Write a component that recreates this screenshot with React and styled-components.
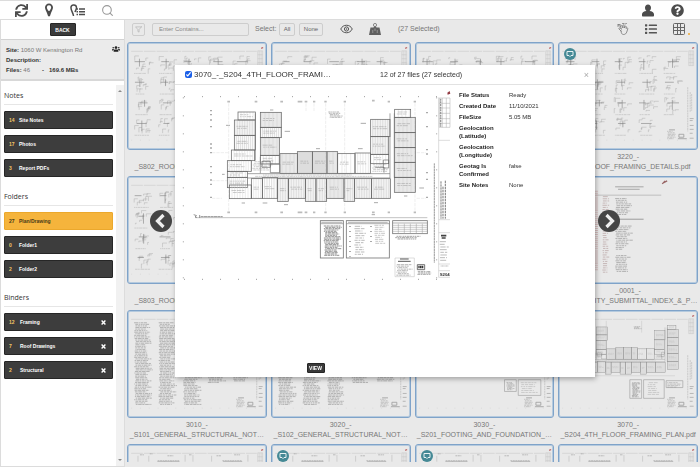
import React from "react";
import styled, { createGlobalStyle } from "styled-components";
import { FaSync, FaUsers, FaQuestionCircle, FaList } from "react-icons/fa";
import { FiFilter, FiSearch } from "react-icons/fi";

const Global = createGlobalStyle`
  *, *::before, *::after { box-sizing: border-box; }
  body { margin: 0; background: #fff; font-family: "Liberation Sans", Arial, sans-serif; font-size: 7px; line-height: 10px; color: #444; }
  button, input { font-family: inherit; margin: 0; }
  button { padding: 0; border: 0; background: none; color: inherit; cursor: pointer; }
  svg { display: block; }
  h1, h2, p, dl, dd, figure { margin: 0; }
`;

/* ---------- shell ---------- */

const Shell = styled.div`
  height: 100vh;
  display: flex;
  flex-direction: column;
  border-top: 1px solid #dcdcdc;
`;

const TopBar = styled.header`
  flex: 0 0 19px;
  display: flex;
  align-items: center;
  justify-content: space-between;
  padding: 0 16px 0 15px;
  border-bottom: 1px solid #dcdcdc;
  color: #4c4c4c;
`;

const IconGroup = styled.div`
  display: flex;
  align-items: center;
  gap: ${(p) => p.$gap}px;
`;

const IconButton = styled.button`
  display: flex;
  align-items: center;
  justify-content: center;
  color: ${(p) => p.$color || "#4c4c4c"};
`;

const Columns = styled.div`
  flex: 1;
  min-height: 0;
  display: grid;
  grid-template-columns: 125px minmax(0, 1fr);
`;

/* ---------- sidebar ---------- */

const Sidebar = styled.aside`
  display: flex;
  flex-direction: column;
  min-height: 0;
  border: solid #dcdcdc;
  border-width: 0 1px 1px 1px;
`;

const BackRow = styled.div`
  flex: 0 0 20px;
  display: flex;
  align-items: center;
  justify-content: center;
  border-bottom: 1px solid #d2d2d2;
`;

const DarkButton = styled.button`
  background: #3a3a3a;
  border: 1px solid #262626;
  border-radius: 1px;
  color: #fff;
  font-weight: bold;
  font-size: 5px;
  line-height: 8px;
  width: ${(p) => p.$width}px;
  height: ${(p) => p.$height}px;
`;

const SiteInfo = styled.section`
  flex: 0 0 41px;
  display: flex;
  justify-content: space-between;
  padding: 5px 4px 0 5px;
  background: #ebebeb;
  border-bottom: 2px solid #d8d8d8;
  font-size: 6px;
  color: #777;
  b { color: #333; }
`;

const Gap = styled.span`
  display: inline-block;
  width: 12px;
`;

const ScrollArea = styled.div`
  flex: 1;
  min-height: 0;
  display: flex;
  padding-top: 4px;
`;

const Lists = styled.nav`
  flex: 1;
  overflow: hidden;
  padding: 6px 3px 0 3px;
`;

const Rail = styled.div`
  flex: 0 0 8px;
  display: flex;
  flex-direction: column;
  justify-content: space-between;
  align-items: center;
  padding: 3px 0;
  background: #f1f1f1;
`;

const Arrow = styled.i`
  border: 2px solid transparent;
  ${(p) => (p.$up ? "border-bottom-color" : "border-top-color")}: #8a8a8a;
`;

const ListGroup = styled.section`
  display: flex;
  flex-direction: column;
  gap: 6px;
  margin-bottom: 15px;
`;

const GroupTitle = styled.h2`
  font: 400 7px/10px "Open Sans", "Noto Sans", sans-serif;
  color: #333;
  padding-bottom: 3px;
  border-bottom: 1px solid #e6e6e6;
`;

const Item = styled.div`
  height: 18px;
  display: flex;
  align-items: center;
  padding: 0 6px 0 4px;
  border: 1px solid ${(p) => (p.$active ? "#eba82c" : "#262626")};
  border-radius: 1px;
  background: ${(p) => (p.$active ? "#f5b43c" : "#3d3d3d")};
  color: ${(p) => (p.$active ? "#4a3a18" : "#fff")};
`;

const ItemMain = styled.button`
  flex: 1;
  display: flex;
  gap: ${(p) => (p.$wide ? 3 : 2)}px;
  text-align: left;
  font-weight: bold;
  font-size: 5px;
  line-height: 8px;
`;

const Count = styled.span`
  width: 8px;
  color: ${(p) => (p.$active ? "inherit" : "#f3c566")};
`;

/* ---------- main ---------- */

const Main = styled.main`
  display: flex;
  flex-direction: column;
  min-height: 0;
  background: #e9e9e9;
  padding: 0 2px 5px;
`;

const Toolbar = styled.div`
  flex: 0 0 22px;
  display: flex;
  align-items: center;
  padding: 0 8px 4px 5px;
  color: #777;
`;

const OutlineButton = styled.button`
  display: flex;
  align-items: center;
  justify-content: center;
  height: 13px;
  width: ${(p) => p.$width}px;
  margin-right: ${(p) => p.$after}px;
  border: 1px solid #cdcdcd;
  border-radius: 2px;
  font-size: 6px;
  color: ${(p) => (p.$faint ? "#aaa" : "#666")};
`;

const SearchInput = styled.input`
  width: 97px;
  height: 13px;
  margin-right: 6px;
  padding: 0 6px;
  border: 1px solid #cdcdcd;
  border-radius: 2px;
  background: transparent;
  font-size: 6px;
  outline: none;
  &::placeholder { color: #888; opacity: 1; }
`;

const SelectLabel = styled.span`
  width: 24px;
`;

const ToolIcons = styled.div`
  display: flex;
  align-items: center;
  gap: 16px;
  padding: 0 17px;
  color: #666;
`;

const ViewIcons = styled(IconGroup)`
  margin-left: auto;
`;

const GridView = styled.span`
  display: flex;
  align-items: flex-end;
  gap: 3px;
  &::after { content: ""; width: 2px; height: 2px; border-radius: 1px; background: #f0a830; }
`;

const Gallery = styled.div`
  flex: 1;
  min-height: 0;
  overflow: hidden;
  display: grid;
  grid-template-columns: repeat(4, minmax(0, 1fr));
  grid-auto-rows: 134px;
  column-gap: 4px;
`;

const Tile = styled.figure`
  position: relative;
  min-width: 0;
`;

const Thumb = styled.div`
  height: 108px;
  border: 1px solid #7fa3c9;
  box-shadow: inset 0 0 0 1px #b5cade;
  border-radius: 3px;
  overflow: hidden;
  svg { width: 100%; height: 100%; }
`;

const Caption = styled.figcaption`
  padding-top: 2px;
  text-align: center;
  white-space: nowrap;
  overflow: hidden;
  color: #777;
`;

const Badge = styled.span`
  position: absolute;
  left: 6px;
  top: 6px;
  width: 12px;
  height: 12px;
  border-radius: 50%;
  background: #458995;
  display: flex;
  align-items: center;
  justify-content: center;
`;

/* ---------- dialog ---------- */

const Overlay = styled.div`
  position: fixed;
  top: 65px;
  left: 150px;
  right: 80px;
  display: flex;
  align-items: center;
  gap: 3px;
`;

const Dialog = styled.section`
  flex: 1;
  min-width: 0;
  background: #fff;
  box-shadow: 1px 2px 5px rgba(0, 0, 0, 0.3);
`;

const DialogHead = styled.header`
  height: 20px;
  display: grid;
  grid-template-columns: 195px 1fr auto;
  align-items: center;
  padding: 0 6px 0 10px;
  border-bottom: 1px solid #e2e2e2;
  color: #333;
`;

const FileCheck = styled.label`
  display: flex;
  align-items: center;
  gap: 2px;
  font-size: 8px;
  input { width: 7px; height: 7px; accent-color: #1a5fe8; }
`;

const CloseButton = styled.button`
  font-size: 9px;
  line-height: 10px;
  color: #aaa;
`;

const DialogBody = styled.div`
  display: grid;
  grid-template-columns: minmax(0, 275fr) minmax(0, 136fr);
  gap: 4px;
  padding: 5px 0 0 5px;
  height: 278px;
  align-items: start;
`;

const Sheet = styled.figure`
  svg { width: 100%; height: auto; }
`;

const Facts = styled.dl`
  display: grid;
  grid-template-columns: 44px 1fr;
  column-gap: 6px;
  row-gap: 3px;
  padding-top: 1px;
  font-size: 6px;
  line-height: 8px;
  color: #333;
  dt { font-weight: bold; color: #222; }
`;

const DialogFoot = styled.footer`
  display: flex;
  justify-content: center;
  padding: 0 139px 4px 0;
`;

const NavButton = styled.button`
  flex: 0 0 22px;
`;

/* ---------- icons ---------- */

const Pin = () => (
  <svg width="10" height="14" viewBox="0 0 20 28">
    <path fillRule="evenodd" fill="currentColor" d="M10 1c4.500 0 8 3.500 8 8 0 4-3.500 8-5 14-.5 2.500-1.500 4-3 4s-2.500-1.500-3-4C5.500 17 2 13 2 9c0-4.500 3.500-8 8-8zM10 4.500A4.300 4.300 0 0 0 5.700 9c0 2 1.700 3.500 2.600 6.500h3.400C12.600 12.500 14.300 11 14.300 9A4.300 4.300 0 0 0 10 4.500z" />
  </svg>
);

const PinList = () => (
  <svg width="15" height="13" viewBox="0 0 30 26" fill="none" stroke="currentColor">
    <path d="M7 24C6.500 18 2 13 2 8a5.500 5.500 0 0 1 11-1c0 4-2 6-3 9" strokeWidth="3" strokeLinejoin="round" />
    <path d="M13 10h3M13 15.500h3M13 21h3M18 10h12M18 15.500h12M18 21h12" strokeWidth="2.800" />
  </svg>
);

const Person = () => (
  <svg width="12" height="13" viewBox="0 0 24 26" fill="currentColor">
    <path d="M12 1c3.700 0 6 2.800 6 6.500 0 3-1.500 5.500-3 6.500 5 .5 9 2.500 9 6.500V23c0 1.200-.8 2-2 2H2c-1.200 0-2-.8-2-2v-2.500C0 16.500 4 14.500 9 14c-1.500-1-3-3.500-3-6.500C6 3.800 8.300 1 12 1z" />
  </svg>
);

const Eye = () => (
  <svg width="13" height="10" viewBox="0 0 26 20" fill="none" stroke="#555">
    <path d="M1.500 10C4 5 8 2.500 13 2.500S22 5 24.500 10C22 15 18 17.500 13 17.500S4 15 1.500 10z" strokeWidth="2" />
    <circle cx="13" cy="10" r="4.200" strokeWidth="2" />
    <circle cx="13" cy="10" r="1.500" fill="#555" stroke="none" />
  </svg>
);

const Weight = () => (
  <svg width="12" height="12" viewBox="0 0 24 24">
    <circle cx="12" cy="4" r="3.200" fill="none" stroke="#888" strokeWidth="2" />
    <path d="M3 9h6l1.500-2h3L15 9h6l3 15H0z" fill="#606060" />
    <path d="M7.500 14v6M12 11v5M16.500 14v6" stroke="#c8c8c8" strokeWidth="1" />
  </svg>
);

const Hand = () => (
  <svg width="12" height="12" viewBox="0 0 24 24" fill="none" stroke="#777" strokeWidth="1.600" strokeLinecap="round">
    <path d="M8 16 4 12c-1-2 1-3 2.500-1.700L9 12.500 6.500 6c-.5-2 2-2.500 2.700-1L12 10l-.5-5c0-2 2.500-2 2.800 0L15 10l1-3c.8-1.600 2.800-1 2.500 1L18 11l1.500-1c1.300-.8 2.500.5 2 2l-2 6c-1 3-3 5-6.500 5s-4.500-3-5-7z" />
    <path d="M2 7V3h4M2 3l4 4M16 2l3-1M14 1h-3" />
  </svg>
);

const GridIcon = () => (
  <svg width="12" height="12" viewBox="0 0 12 12" fill="none" stroke="#666">
    <rect x=".5" y=".5" width="11" height="11" rx="1" />
    <path d="M4.500 1v10M7.500 1v10M1 4.500h10M1 7.500h10" />
  </svg>
);

const Chevron = ({ right }) => (
  <svg width="22" height="22" viewBox="0 0 22 22">
    <circle cx="11" cy="11" r="11" fill="#454545" />
    <path d={right ? "M8.500 5l6 6-6 6" : "M13.500 5l-6 6 6 6"} fill="none" stroke="#eee" strokeWidth="3.200" />
  </svg>
);

const Comment = () => (
  <svg width="8" height="8" viewBox="0 0 8 8" fill="none" stroke="#e8f2f3">
    <path d="M1 1.500h6v4H5L4 6.600 3 5.500H1z" />
  </svg>
);

const Cross = () => (
  <svg width="5" height="5" viewBox="0 0 5 5" stroke="#fff" strokeWidth="1.400">
    <path d="M.6.6l3.800 3.800M4.400.6.6 4.400" />
  </svg>
);

/* ---------- drawings ---------- */

const rng = (seed) => () => {
  seed = (seed * 16807) % 2147483647;
  return seed / 2147483647;
};

/* ragged lines of tiny lettering */
const scribble = (r, x, y, w, h, step) => {
  let d = "";
  for (let yy = y; yy < y + h; yy += step) {
    let xx = x + r() * w * 0.1;
    const end = x + w * (0.6 + r() * 0.4);
    while (xx < end) {
      const len = Math.min(step * (0.6 + r() * 2), end - xx);
      d += `M${xx.toFixed(1)} ${yy.toFixed(1)}h${len.toFixed(1)}`;
      xx += len + step * 0.4;
    }
  }
  return d;
};

const TitleBlock = () => (
  <g stroke="#a8a8a8" strokeWidth=".5" fill="none">
    <path d="M3 8.500h128" stroke="#c4c4c4" strokeDasharray="12 1" />
    <path d="M132 8h5v15h-5zM133.500 8v15M135.500 8v15M132 12h5M132 16h5M132 20h5" stroke="#c4c4c4" />
    <path d="M133.500 50v20M135 52v17M131 45v45" strokeDasharray="2 .6" />
    <path d="M133 77h4M133 79h3M133 84h4M133 88h4M133 92h3M133 97h4" strokeWidth=".8" />
    <path d="M3 99h130" stroke="#ccc" strokeDasharray="1 8" />
    <path d="M135.500 5.500l2-1" stroke="#b66" strokeWidth="1.200" />
  </g>
);

const Stamps = () => {
  const r = rng(77);
  return (
    <g stroke="#999" strokeWidth=".5" fill="none">
      <path d={scribble(r, 110, 90, 9, 8, 1.500)} />
      <path d="M112 88.500h6" strokeWidth=".8" />
      <path d="M122 93h5v3h-5zM121 97.500h9" strokeWidth=".8" />
    </g>
  );
};

const DetailSheet = ({ seed }) => {
  const r = rng(seed);
  let fine = "";
  let dark = "";
  for (let j = 0; j < 4; j++) {
    for (let i = 0; i < 5; i++) {
      if (j === 3 && i > 3) continue;
      const x = 6 + i * 25;
      const y = 13 + j * 21;
      fine += scribble(r, x, y + 18, 17, 1, 1.300);
      for (let k = 0; k < 9; k++) {
        const px = x + r() * 16;
        const py = y + r() * 14;
        fine += `M${px.toFixed(1)} ${py.toFixed(1)}h${(1 + r() * 4).toFixed(1)}`;
        fine += `M${px.toFixed(1)} ${py.toFixed(1)}v${(1 + r() * 4).toFixed(1)}`;
      }
      const cx = x + 5 + r() * 6;
      if (r() > 0.3) dark += `M${cx.toFixed(1)} ${y + 3}v${(6 + r() * 6).toFixed(1)}`;
      dark += `M${(cx - 5).toFixed(1)} ${y + 6}h${(5 + r() * 7).toFixed(1)}`;
    }
  }
  return (
    <g fill="none">
      <path d={fine} stroke="#a0a0a0" strokeWidth=".4" />
      <path d={dark} stroke="#808080" strokeWidth=".6" />
      <Stamps />
    </g>
  );
};

const NotesSheet = ({ seed }) => {
  const r = rng(seed);
  const heights = [84, 84, 84, 62, 60];
  return (
    <g fill="none">
      {heights.map((h, i) => (
        <path key={i} d={scribble(r, 6 + i * 25, 12, 19, h, 1.600)} stroke="#8c8c8c" strokeWidth=".6" />
      ))}
      <Stamps />
    </g>
  );
};

const IndexSheet = () => {
  const r = rng(9);
  return (
    <g fill="none" strokeWidth=".7">
      <path d="M57 10h29M60 12.500h22" stroke="#888" />
      <path d="M37 18.500h67" stroke="#aaa" />
      <path d={scribble(r, 57, 22, 18, 17, 1.800)} stroke="#999" />
      <path d="M57 43h29" stroke="#777" />
      <path d={scribble(r, 57, 50, 18, 18, 1.800)} stroke="#999" />
      <path d={scribble(r, 57, 70, 12, 5, 1.800)} stroke="#999" />
      <path d={scribble(r, 57, 80, 17, 17, 1.800)} stroke="#999" />
      <path d={scribble(r, 44, 20, 7, 78, 2.200)} stroke="#b5a0a0" />
      <path d="M38 14v82" stroke="#d5bcbc" strokeWidth="3" strokeDasharray="1 1" />
      <path d="M105 7l3-3M106 6l4-2" stroke="#966" strokeWidth="1.400" />
    </g>
  );
};

/* floor framing plan: [x, y, width, height, line spacing, hatch darkness] */
const ROOMS = [
  [204, 156, 52, 24, 9, 0], [193, 180, 63, 46, 5, 1], [193, 226, 63, 44, 6, 1], [184, 270, 70, 32, 8, 0],
  [172, 302, 72, 32, 7, 0], [172, 334, 60, 18, 9, 0], [172, 352, 60, 31, 6, 0], [178, 375, 66, 41, 8, 0],
  [271, 157, 63, 45, 4, 1], [271, 202, 63, 31, 6, 1], [271, 233, 57, 53, 4, 1], [271, 286, 57, 26, 9, 0],
  [330, 281, 52, 59, 4, 1], [382, 275, 45, 65, 3, 1], [427, 275, 44, 65, 3, 1], [471, 275, 32, 65, 4, 1],
  [503, 281, 52, 59, 13, 0], [555, 279, 46, 61, 8, 0], [602, 178, 58, 52, 5, 1], [602, 230, 54, 53, 5, 1],
  [602, 283, 54, 28, 9, 0], [673, 172, 63, 46, 4, 1], [673, 218, 63, 45, 4, 1], [673, 263, 63, 44, 4, 1],
  [673, 307, 63, 45, 4, 1], [673, 352, 63, 45, 4, 1], [674, 148, 48, 24, 11, 0], [244, 356, 33, 59, 7, 0],
  [277, 353, 46, 62, 7, 1], [322, 356, 33, 68, 5, 1], [355, 356, 51, 59, 5, 1], [406, 356, 32, 68, 5, 1],
  [438, 356, 32, 68, 5, 1], [470, 356, 52, 59, 4, 1], [522, 356, 32, 68, 5, 1], [554, 356, 51, 59, 5, 1],
  [605, 356, 56, 59, 5, 1],
];

const PlanGeometry = () => {
  const r = rng(321);
  return (
    <g fill="none">
      {ROOMS.map(([x, y, w, h, step, dark], i) => {
        let d = "";
        for (let k = step; k < w; k += step) d += `M${x + k} ${y}v${h}`;
        return (
          <g key={i}>
            <path d={d} stroke={dark ? "#aaa" : "#ccc"} strokeWidth="1.200" />
            <path d={scribble(r, x + 6, y + h / 2 - 4, w - 12, 7, 6)} stroke="#999" strokeWidth="1.500" />
            <rect x={x} y={y} width={w} height={h} stroke="#666" strokeWidth="2.200" />
          </g>
        );
      })}
      <path d="M232 341H660M232 354H660M256 160V302M271 290V340M660 160V354M673 160V352" stroke="#777" strokeWidth="2" />
      <path d={scribble(r, 240, 345, 410, 8, 4)} stroke="#999" strokeWidth="1.500" />
      <path d={scribble(r, 246, 305, 80, 30, 5)} stroke="#999" strokeWidth="1.500" />
      <path d={scribble(r, 606, 314, 50, 24, 5)} stroke="#999" strokeWidth="1.500" />
      <path d="M276 304h25v18h-25zM301 312h28v26h-28zM616 322h26v16M640 300h16v24h-16z" stroke="#666" strokeWidth="2" />
    </g>
  );
};

const FloorPlan = () => {
  const r = rng(55);
  return (
    <g fill="none">
      <g stroke="#999" strokeWidth="3">
        <path d="M42 110h760" strokeDasharray="3 51" />
        <path d="M42 658h760" strokeDasharray="3 51" />
        <path d="M40 112v548M800 112v548" strokeDasharray="3 51" />
        <path d="M172 125h8M254 125h8M331 125h8M383 125h14M404 125h8M429 125h7M463 125h7M521 125h7M606 122h8M653 125h7M731 125h7M172 457h8M254 457h8M331 457h8M383 457h14M404 457h8M429 457h7M463 457h7M521 457h7M606 457h8M653 457h7M731 457h7" strokeWidth="5" stroke="#bbb" />
        <path d="M120 152h6M120 164h6M120 180h6M120 200h6M120 252h6M120 264h6M120 278h6M120 320h6M120 338h6M120 360h6M120 373h6M120 412h6M768 158h6M768 200h6M768 269h6M768 282h6M768 338h6M768 358h6M768 412h6" strokeWidth="4" stroke="#aaa" />
        <path d="M168 196h12M344 214h16M572 190h16M564 266h14M300 150h10M438 266h12M156 343h8M215 429h10M278 429h14M342 434h12M612 428h12M702 408h10M748 384h14M605 464h10" strokeWidth="3" stroke="#aaa" />
      </g>
      <path d="M176 130v326M524 130v326M467 130v326M408 130v25M432 130v25M735 130v326M126 278h50M126 362h50M740 278h28M126 415h30M740 415h28" stroke="#d6d6d6" strokeWidth="1.200" strokeDasharray="10 3" />
      <PlanGeometry />
      <path d={scribble(r, 475, 156, 48, 20, 4)} stroke="#888" strokeWidth="1.800" />
      <path d="M76 473h696" stroke="#888" strokeWidth="1.500" />
      <path d="M71 464l9 3-5 4 6 2M89 465v9M92 470h66" stroke="#777" strokeWidth="2.400" strokeDasharray="9 1" />
      <g stroke="#777" strokeWidth="2.500">
        <rect x="451" y="482" width="69" height="112" />
        <rect x="529" y="482" width="129" height="112" />
        <rect x="668" y="482" width="104" height="39" />
      </g>
      <path d="M454 487h63M534 487h119M668 489h104M529 491h129M451 491h69" stroke="#888" strokeWidth="2" />
      <path d={scribble(r, 461, 498, 55, 91, 4)} stroke="#777" strokeWidth="2.400" />
      <path d={scribble(r, 553, 499, 35, 90, 7)} stroke="#999" strokeWidth="2" />
      <path d={scribble(r, 613, 496, 34, 60, 6)} stroke="#aaa" strokeWidth="2" />
      <path d="M540 498v92M603 498v60" stroke="#999" strokeWidth="5" strokeDasharray="3 12" />
      <path d="M669 496h102M669 502h102M669 508h102M669 514h102M685 491v28M703 491v28M721 491v28M739 491v28M757 491v28" stroke="#999" strokeWidth="1.500" />
      <path d={scribble(r, 674, 529, 90, 9, 4)} stroke="#777" strokeWidth="2" />
      <path d="M675 594h58v56h-58z" stroke="#bbb" strokeWidth="1.500" />
      <path d="M690 597h26M684 604h38" stroke="#555" strokeWidth="3" />
      <path d={scribble(r, 679, 614, 50, 34, 4.500)} stroke="#888" strokeWidth="1.800" />
      <path d="M742 614h22v15h-22z" stroke="#555" strokeWidth="2.500" />
      <path d="M745 621h16" stroke="#333" strokeWidth="7" strokeDasharray="4 1" />
      <path d={scribble(r, 741, 635, 46, 10, 4)} stroke="#777" strokeWidth="2" />
      <path d="M793 310v298" stroke="#999" strokeWidth="3" strokeDasharray="7 1" />
      <path d="M806 112v540" stroke="#ccc" strokeWidth="2" />
      <path d="M808 114h32v88h-32zM817 114v88M829 114v88M808 130h32M808 144h32M808 160h32M808 176h32M808 190h32" stroke="#aaa" strokeWidth="1.500" />
      <path d="M812 116v84" stroke="#999" strokeWidth="4" strokeDasharray="6 2" />
      <path d="M806 241h34M806 479h34M806 518h34M806 612h34M806 632h34M806 652h34" stroke="#bbb" strokeWidth="1.500" />
      <path d="M813 364v112M819 380v96M826 362v114" stroke="#777" strokeWidth="3" strokeDasharray="7 2" />
      <path d="M813 527h16M815 534h12" stroke="#444" strokeWidth="5" />
      <path d={scribble(r, 809, 545, 28, 62, 8)} stroke="#999" strokeWidth="2" />
      <path d="M812 618h24" stroke="#999" strokeWidth="2" strokeDasharray="3 1" />
      <text x="809" y="649" fontSize="13" fontWeight="bold" fill="#333">S204</text>
      <path d="M832 98l7-5 2 8-8 3z" fill="#943c44" />
    </g>
  );
};

const PlanSheet = () => {
  const r = rng(12);
  return (
    <g fill="none">
      <g transform="translate(-11 -12) scale(.18)" opacity=".75">
        <PlanGeometry />
      </g>
      <path d="M8 66h110M48 10v55M84 10v12" stroke="#bbb" strokeWidth=".4" />
      <path d={scribble(r, 76, 16, 8, 3, 1)} stroke="#888" strokeWidth=".5" />
      <path d="M72 70h12v19H72zM86 70h21v19H86zM109 71h17v7h-17z" stroke="#999" strokeWidth=".6" />
      <path d={scribble(r, 74, 73, 9, 15, 1.200)} stroke="#888" strokeWidth=".6" />
      <path d={scribble(r, 90, 73, 12, 14, 2)} stroke="#aaa" strokeWidth=".5" />
      <path d={scribble(r, 110, 73, 15, 5, 1.500)} stroke="#999" strokeWidth=".5" />
      <Stamps />
    </g>
  );
};

const FoundationSheet = () => {
  const r = rng(31);
  return (
    <g fill="none">
      <path d="M10 66h14" stroke="#999" strokeWidth=".8" strokeDasharray="2 .5" />
      <path d="M90 70h12v12H90zM104 70h23v16h-23z" stroke="#999" strokeWidth=".6" />
      <path d={scribble(r, 92, 73, 9, 8, 1.200)} stroke="#999" strokeWidth=".6" />
      <path d={scribble(r, 106, 73, 19, 12, 2)} stroke="#aaa" strokeWidth=".5" />
      <Stamps />
    </g>
  );
};

const FramingSheet = () => (
  <g fill="none" stroke="#999" strokeWidth=".6">
    <path d="M12 10h4M22 9h3M40 11h6M62 10h3M90 11h5M108 10h6M30 16h22M96 16h20" strokeDasharray="2 .5" />
    <path d="M10 11v6M21 11v6M58 10v7M66 10v7M85 11v6M122 10v7" stroke="#bbb" />
    <path d="M30 17h22v8H30zM37 17v8M44 17v8M97 17h19v8H97zM106 17v8" />
  </g>
);

const SHEETS = {
  detail: DetailSheet,
  notes: NotesSheet,
  index: IndexSheet,
  plan: PlanSheet,
  foundation: FoundationSheet,
  framing: FramingSheet,
};

/* ---------- data ---------- */

const GROUPS = [
  { title: "Notes", items: [[14, "Site Notes"], [17, "Photos"], [3, "Report PDFs"]] },
  { title: "Folders", active: 0, items: [[27, "Plan/Drawing"], [0, "Folder1"], [2, "Folder2"]] },
  { title: "Binders", removable: true, items: [[12, "Framing"], [7, "Roof Drawings"], [2, "Structural"]] },
];

const FILES = [
  { kind: "detail", name: ["3190_-", "_S802_ROOF_FRAMING_DETAILS.pdf"] },
  { kind: "detail", name: ["3200_-", "_S701_FRAMING_DETAILS.pdf"] },
  { kind: "detail", name: ["3210_-", "_S801_FRAMING_DETAILS.pdf"] },
  { kind: "detail", name: ["3220_-", "_S804_ROOF_FRAMING_DETAILS.pdf"], note: true },
  { kind: "detail", name: ["3230_-", "_S803_ROOF_FRAMING_DETAILS.pdf"] },
  { kind: "detail", name: ["3240_-", "_S805_FRAMING_DETAILS.pdf"] },
  { kind: "detail", name: ["3250_-", "_S806_FRAMING_DETAILS.pdf"] },
  { kind: "index", name: ["_0001_-", "_CONTINUITY_SUBMITTAL_INDEX_&_P…"] },
  { kind: "notes", name: ["3010_-", "_S101_GENERAL_STRUCTURAL_NOT…"] },
  { kind: "notes", name: ["3020_-", "_S102_GENERAL_STRUCTURAL_NOT…"] },
  { kind: "foundation", name: ["3030_-", "_S201_FOOTING_AND_FOUNDATION_…"] },
  { kind: "plan", name: ["3070_-", "_S204_4TH_FLOOR_FRAMING_PLAN.pdf"] },
  { kind: "framing", name: ["3040_-", "_S202_2ND_FLOOR_FRAMING_PLAN.pdf"] },
  { kind: "framing", name: ["3050_-", "_S203_3RD_FLOOR_FRAMING_PLAN.pdf"], note: true },
  { kind: "framing", name: ["3080_-", "_S205_5TH_FLOOR_FRAMING_PLAN.pdf"], note: true },
  { kind: "framing", name: ["3090_-", "_S206_ROOF_FRAMING_PLAN.pdf"] },
];

const FACTS = [
  ["File Status", "Ready"],
  ["Created Date", "11/10/2021"],
  ["FileSize", "5.05 MB"],
  ["Geolocation (Latitude)", ""],
  ["Geolocation (Longitude)", ""],
  ["Geotag Is Confirmed", "false"],
  ["Site Notes", "None"],
];

/* ---------- page ---------- */

function FileTile({ file, seed }) {
  const Drawing = SHEETS[file.kind];
  return (
    <Tile>
      <Thumb>
        <svg viewBox="0 0 140 108" preserveAspectRatio="xMidYMid meet" aria-hidden="true">
          {file.kind !== "index" && <TitleBlock />}
          <Drawing seed={seed} />
        </svg>
      </Thumb>
      {file.note && <Badge><Comment /></Badge>}
      <Caption>{file.name[0]}<br />{file.name[1]}</Caption>
    </Tile>
  );
}

export default function App() {
  return (
    <Shell>
      <Global />
      <TopBar>
        <IconGroup $gap={16}>
          <IconButton aria-label="Refresh"><FaSync size={13} /></IconButton>
          <IconButton aria-label="Sites"><Pin /></IconButton>
          <IconButton aria-label="Site list"><PinList /></IconButton>
          <IconButton aria-label="Search" $color="#999"><FiSearch size={13} /></IconButton>
        </IconGroup>
        <IconGroup $gap={17}>
          <IconButton aria-label="Account"><Person /></IconButton>
          <IconButton aria-label="Help"><FaQuestionCircle size={13} /></IconButton>
        </IconGroup>
      </TopBar>

      <Columns>
        <Sidebar>
          <BackRow><DarkButton $width={26} $height={13}>BACK</DarkButton></BackRow>
          <SiteInfo>
            <div>
              <p><b>Site:</b> 1060 W Kensington Rd</p>
              <p><b>Description:</b></p>
              <p><b>Files:</b> 46<Gap /><b>- &nbsp; 169.6 MBs</b></p>
            </div>
            <FaUsers size={8} color="#222" />
          </SiteInfo>
          <ScrollArea>
            <Lists>
              {GROUPS.map((g) => (
                <ListGroup key={g.title}>
                  <GroupTitle>{g.title}</GroupTitle>
                  {g.items.map(([count, label], i) => (
                    <Item key={label} $active={g.active === i}>
                      <ItemMain $wide={g.removable}>
                        <Count $active={g.active === i}>{count}</Count>
                        {label}
                      </ItemMain>
                      {g.removable && <IconButton aria-label={`Remove ${label}`}><Cross /></IconButton>}
                    </Item>
                  ))}
                </ListGroup>
              ))}
            </Lists>
            <Rail><Arrow $up /><Arrow /></Rail>
          </ScrollArea>
        </Sidebar>

        <Main>
          <Toolbar>
            <OutlineButton $width={13} $after={7} $faint aria-label="Filter"><FiFilter size={7} /></OutlineButton>
            <SearchInput placeholder="Enter Contains..." aria-label="Enter Contains" />
            <SelectLabel>Select:</SelectLabel>
            <OutlineButton $width={16} $after={4}>All</OutlineButton>
            <OutlineButton $width={24} $after={0}>None</OutlineButton>
            <ToolIcons>
              <IconButton aria-label="Show"><Eye /></IconButton>
              <IconButton aria-label="Binder"><Weight /></IconButton>
            </ToolIcons>
            <span>(27 Selected)</span>
            <ViewIcons $gap={16}>
              <IconButton aria-label="Select by touch"><Hand /></IconButton>
              <IconButton aria-label="List view"><FaList size={12} color="#555" /></IconButton>
              <IconButton aria-label="Grid view"><GridView><GridIcon /></GridView></IconButton>
            </ViewIcons>
          </Toolbar>
          <Gallery>
            {FILES.map((f, i) => <FileTile key={f.name[1]} file={f} seed={101 + i * 37} />)}
          </Gallery>
        </Main>
      </Columns>

      <Overlay>
        <NavButton aria-label="Previous file"><Chevron /></NavButton>
        <Dialog role="dialog" aria-label="File preview">
          <DialogHead>
            <FileCheck>
              <input type="checkbox" defaultChecked />
              3070_-_S204_4TH_FLOOR_FRAMI…
            </FileCheck>
            <span>12 of 27 files (27 selected)</span>
            <CloseButton aria-label="Close">×</CloseButton>
          </DialogHead>
          <DialogBody>
            <Sheet>
              <svg viewBox="30 90 825 575" aria-label="4th floor framing plan"><FloorPlan /></svg>
            </Sheet>
            <Facts>
              {FACTS.map(([k, v]) => (
                <React.Fragment key={k}><dt>{k}</dt><dd>{v}</dd></React.Fragment>
              ))}
            </Facts>
          </DialogBody>
          <DialogFoot><DarkButton $width={18} $height={10}>VIEW</DarkButton></DialogFoot>
        </Dialog>
        <NavButton aria-label="Next file"><Chevron right /></NavButton>
      </Overlay>
    </Shell>
  );
}
